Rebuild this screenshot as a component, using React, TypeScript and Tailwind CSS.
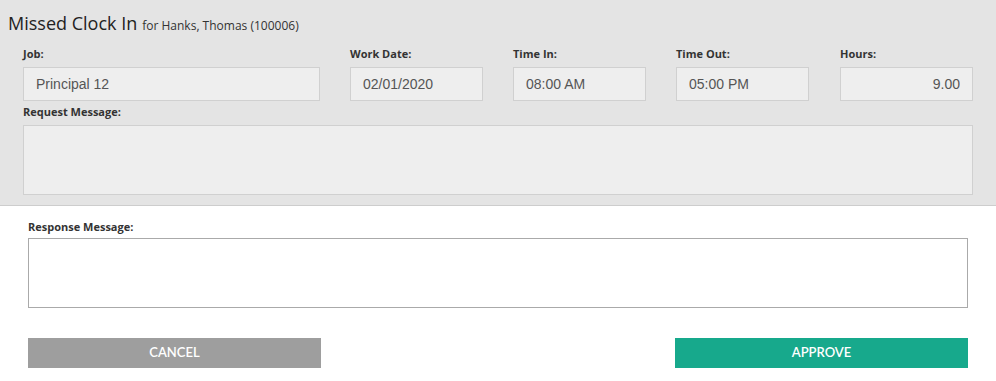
const labelCls =
  "block text-[11px] font-bold text-[#333] leading-[13px] mb-[7px] font-['Open_Sans','DejaVu_Sans',sans-serif]";
const inputCls =
  "h-[34px] w-full border border-[#d0d0d0] bg-[#eeeeee] px-[12px] text-[14px] text-[#555] font-['Liberation_Sans',Arial,sans-serif] outline-none";

const Field = ({
  label,
  value,
  width,
  right,
}: {
  label: string;
  value: string;
  width: string;
  right?: boolean;
}) => (
  <div className={width}>
    <label className={labelCls}>{label}</label>
    <input
      disabled
      type="text"
      value={value}
      readOnly
      className={`${inputCls} ${right ? "text-right" : ""}`}
    />
  </div>
);

const App = () => {
  return (
    <div className="w-[996px] h-[381px] bg-white font-['Open_Sans','DejaVu_Sans',sans-serif]">
      {/* Request details */}
      <div className="bg-[#e4e4e4] border-b border-[#cdcdcd] h-[206px] pt-[12px]">
        <div className="pl-[8px] flex items-baseline gap-[5px] text-[#222]">
          <span className="text-[18px] leading-[22px] font-medium">Missed Clock In</span>
          <span className="text-[12px] text-[#333]">for Hanks, Thomas (100006)</span>
        </div>

        <div className="pl-[23px] pr-[23px] mt-[12px] flex">
          <Field label="Job:" value="Principal 12" width="w-[297px]" />
          <Field label="Work Date:" value="02/01/2020" width="w-[133px] ml-[30px]" />
          <Field label="Time In:" value="08:00 AM" width="w-[133px] ml-[30px]" />
          <Field label="Time Out:" value="05:00 PM" width="w-[133px] ml-[30px]" />
          <Field label="Hours:" value="9.00" width="w-[133px] ml-[31px]" right />
        </div>

        <div className="pl-[23px] pr-[23px] mt-[4px]">
          <label className={labelCls + " !mb-[7px]"}>Request Message:</label>
          <textarea
            disabled
            className="block h-[70px] w-[950px] border border-[#d0d0d0] bg-[#eeeeee] resize-none outline-none"
          ></textarea>
        </div>
      </div>

      {/* Response */}
      <div className="px-[28px] pt-[14px]">
        <label className={labelCls + " !mb-[5px]"}>Response Message:</label>
        <textarea className="block h-[70px] w-[940px] border border-[#aaaaaa] bg-white resize-none outline-none"></textarea>

        <div className="mt-[30px] flex justify-between w-[940px]">
          <button className="h-[30px] w-[293px] bg-[#9e9e9e] text-white text-[13px] font-semibold font-['Lato',sans-serif]">
            CANCEL
          </button>
          <button className="h-[30px] w-[293px] bg-[#17a98c] text-white text-[13px] font-semibold font-['Lato',sans-serif]">
            APPROVE
          </button>
        </div>
      </div>
    </div>
  );
};

export default App;
